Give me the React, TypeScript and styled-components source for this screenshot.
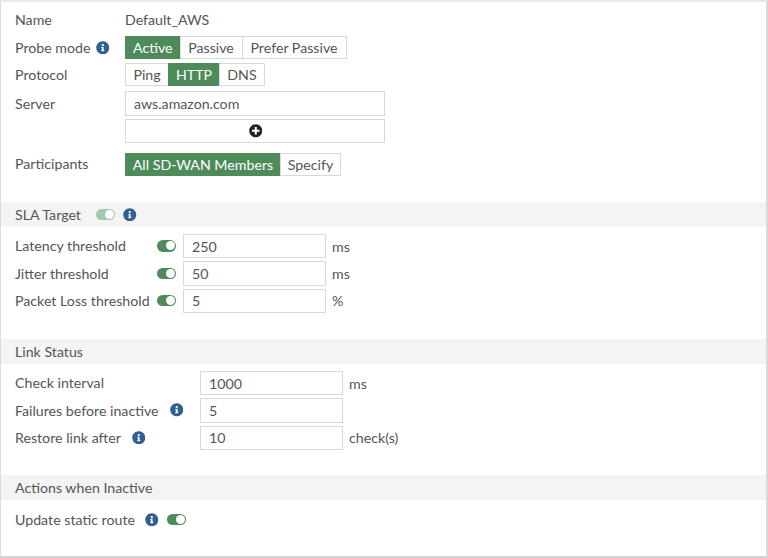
import React from 'react';
import styled, { createGlobalStyle } from 'styled-components';
import { FaInfoCircle, FaPlusCircle } from 'react-icons/fa';

const GlobalStyle = createGlobalStyle`
  html, body {
    margin: 0;
    padding: 0;
    background: #ffffff;
  }
  body {
    font-family: Lato, "Open Sans", sans-serif;
    font-size: 14.2px;
    color: #555555;
  }
`;

const Panel = styled.div`
  box-sizing: border-box;
  width: 768px;
  height: 558px;
  border-style: solid;
  border-width: 2px 2px 2px 1px;
  border-color: #e8e8e8 #d8d8d8 #d2d2d2 #dcdcdc;
  overflow: hidden;
  padding-top: 6px;
`;

const Body = styled.div`
  padding: 0 14px;
  display: flex;
  flex-direction: column;
  gap: 3px;
`;

const Row = styled.div<{ $top?: number }>`
  display: flex;
  align-items: center;
  height: 24.4px;
  margin-top: ${({ $top }) => $top ?? 0}px;
`;

const NameRow = styled(Row)`
  height: 23.4px;
  margin-bottom: 1px;
`;

const Label = styled.div<{ $width: number }>`
  width: ${({ $width }) => $width}px;
  flex-shrink: 0;
  display: flex;
  align-items: center;
  justify-content: space-between;
  white-space: nowrap;
  line-height: 17px;
  padding-bottom: 0.5px;
  box-sizing: border-box;
`;

const LabelStart = styled(Label)<{ $gap?: number }>`
  justify-content: flex-start;
  gap: ${({ $gap }) => $gap ?? 11}px;
`;

const Segments = styled.div`
  display: flex;
  height: 23px;
`;

const Segment = styled.div<{ $active?: boolean; $width: number }>`
  box-sizing: border-box;
  width: ${({ $width }) => $width}px;
  display: flex;
  align-items: center;
  justify-content: center;
  white-space: nowrap;
  margin-left: -1px;
  border: 1px solid ${({ $active }) => ($active ? '#4e8a5a' : '#d9d9d9')};
  background: ${({ $active }) => ($active ? '#4e8a5a' : '#ffffff')};
  color: ${({ $active }) => ($active ? '#ffffff' : '#555555')};

  &:first-child {
    margin-left: 0;
  }
`;

const Input = styled.div<{ $width: number; $left?: number }>`
  box-sizing: border-box;
  width: ${({ $width }) => $width}px;
  height: 24.4px;
  margin-left: ${({ $left }) => $left ?? 0}px;
  border: 1px solid #d9d9d9;
  padding: 0 8px;
  display: flex;
  align-items: center;
  justify-content: flex-start;
  background: #ffffff;
`;

const AddButton = styled(Input)`
  justify-content: center;
  color: #222222;
  padding-left: 9px;
`;

const Unit = styled.span`
  margin-left: 6px;
`;

const Header = styled.div<{ $top: number }>`
  height: 25.6px;
  margin-top: ${({ $top }) => $top}px;
  margin-bottom: 6.7px;
  padding: 0 14px;
  display: flex;
  align-items: center;
  gap: 15px;
  background: #f4f4f4;
  line-height: 17px;
`;

const IconGroup = styled.div<{ $gap: number }>`
  display: flex;
  align-items: center;
  gap: ${({ $gap }) => $gap}px;
`;

const Track = styled.span<{ $muted?: boolean }>`
  display: inline-flex;
  align-items: center;
  justify-content: flex-end;
  box-sizing: border-box;
  width: 19.5px;
  height: 11.5px;
  padding-right: 1.5px;
  border-radius: 6px;
  flex-shrink: 0;
  background: ${({ $muted }) => ($muted ? '#a6c8ac' : '#4e8a5a')};
`;

const Thumb = styled.span`
  width: 9px;
  height: 9px;
  border-radius: 50%;
  background: #ffffff;
`;

const InfoGlyph = styled(FaInfoCircle)`
  flex-shrink: 0;
  width: 13.5px;
  height: 13.5px;
  color: #2f5f93;
`;

const PlusGlyph = styled(FaPlusCircle)`
  width: 13.5px;
  height: 13.5px;
`;

const Toggle = ({ muted }: { muted?: boolean }) => (
  <Track $muted={muted}>
    <Thumb />
  </Track>
);

const App = () => {
  return (
    <>
      <GlobalStyle />
      <Panel>
        <Body>
          <NameRow>
            <Label $width={110}>Name</Label>
            <span>Default_AWS</span>
          </NameRow>
          <Row>
            <LabelStart $width={110} $gap={5}>
              Probe mode <InfoGlyph />
            </LabelStart>
            <Segments>
              <Segment $active $width={55.5}>Active</Segment>
              <Segment $width={63}>Passive</Segment>
              <Segment $width={105}>Prefer Passive</Segment>
            </Segments>
          </Row>
          <Row>
            <Label $width={110}>Protocol</Label>
            <Segments>
              <Segment $width={44}>Ping</Segment>
              <Segment $active $width={52}>HTTP</Segment>
              <Segment $width={46}>DNS</Segment>
            </Segments>
          </Row>
          <Row $top={1}>
            <Label $width={110}>Server</Label>
            <Input $width={260}>aws.amazon.com</Input>
          </Row>
          <Row>
            <Label $width={110} />
            <AddButton $width={260}>
              <PlusGlyph />
            </AddButton>
          </Row>
          <Row $top={6}>
            <Label $width={110}>Participants</Label>
            <Segments>
              <Segment $active $width={156}>All SD-WAN Members</Segment>
              <Segment $width={61}>Specify</Segment>
            </Segments>
          </Row>
        </Body>

        <Header $top={25.3}>
          SLA Target
          <IconGroup $gap={8}>
            <Toggle muted />
            <InfoGlyph />
          </IconGroup>
        </Header>
        <Body>
          {[
            ['Latency threshold', '250', 'ms'],
            ['Jitter threshold', '50', 'ms'],
            ['Packet Loss threshold', '5', '%'],
          ].map(([name, value, unit]) => (
            <Row key={name}>
              <Label $width={161}>
                {name}
                <Toggle />
              </Label>
              <Input $width={143} $left={7}>{value}</Input>
              <Unit>{unit}</Unit>
            </Row>
          ))}
        </Body>

        <Header $top={25.5}>Link Status</Header>
        <Body>
          <Row>
            <Label $width={185}>Check interval</Label>
            <Input $width={143}>1000</Input>
            <Unit>ms</Unit>
          </Row>
          <Row>
            <LabelStart $width={185}>
              Failures before inactive
              <InfoGlyph />
            </LabelStart>
            <Input $width={143}>5</Input>
          </Row>
          <Row>
            <LabelStart $width={185}>
              Restore link after
              <InfoGlyph />
            </LabelStart>
            <Input $width={143}>10</Input>
            <Unit>check(s)</Unit>
          </Row>
        </Body>

        <Header $top={24.8}>Actions when Inactive</Header>
        <Body>
          <Row $top={0.5}>
            <LabelStart $width={185} $gap={10}>
              Update static route
              <IconGroup $gap={8.5}>
                <InfoGlyph />
                <Toggle />
              </IconGroup>
            </LabelStart>
          </Row>
        </Body>
      </Panel>
    </>
  );
};

export default App;
